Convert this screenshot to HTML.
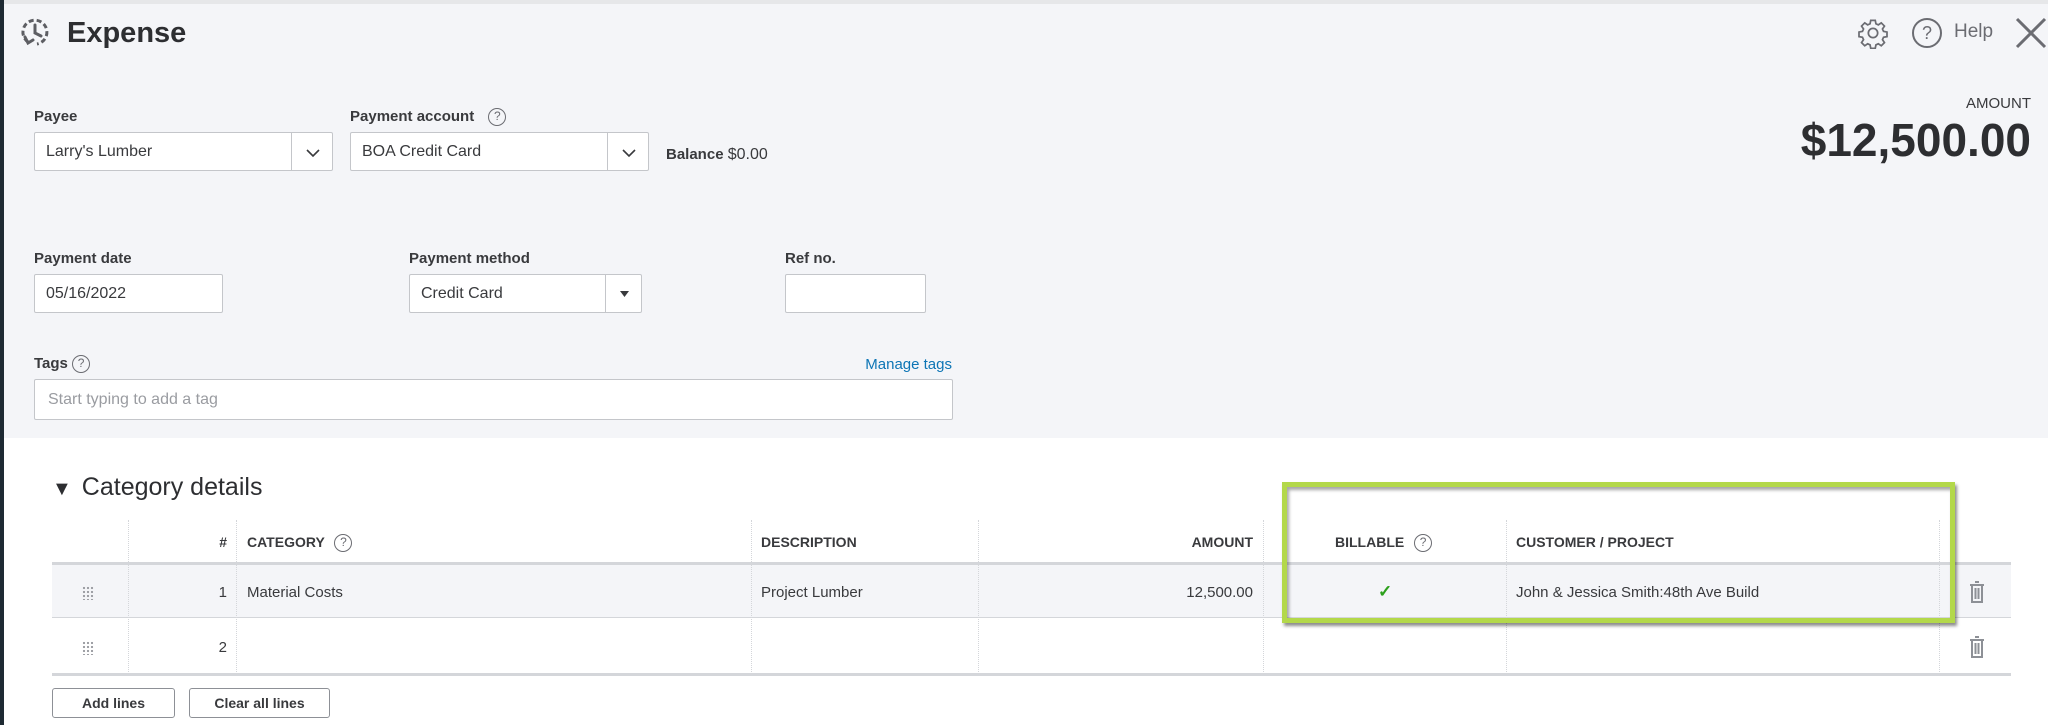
<!DOCTYPE html>
<html><head><meta charset="utf-8">
<style>
*{box-sizing:border-box;margin:0;padding:0}
body{width:2048px;height:725px;overflow:hidden;background:#fff;font-family:"Liberation Sans",sans-serif;color:#393a3d;position:relative}
.a{position:absolute}
.top{left:0;top:0;width:2048px;height:438px;background:#f4f5f8;border-top:4px solid #e6e7e9}
.lstrip{left:0;top:0;width:4px;height:725px;background:#1e2a33}
.lbl{font-size:15px;font-weight:bold;color:#393a3d}
.inp{background:#fff;border:1px solid #c4c6ca;border-radius:2px;font-size:16px;color:#393a3d;padding-left:11px;display:flex;align-items:center}
.dd{position:absolute;top:0;bottom:0;border-left:1px solid #c4c6ca}
.q{display:inline-block;width:18px;height:18px;border:1.5px solid #6b6c72;border-radius:50%;font-size:12px;line-height:15px;text-align:center;color:#6b6c72;font-weight:normal;vertical-align:middle}
.th{font-size:14px;font-weight:bold;color:#393a3d;top:534px}
.td{font-size:15px;color:#393a3d}
.vl{top:520px;height:154px;width:0;border-left:1px dotted #d4d6da}
.btn{border:1.5px solid #8d9096;border-radius:3px;background:#fff;font-size:14px;font-weight:bold;color:#393a3d;display:flex;align-items:center;justify-content:center;top:688px;height:30px}
.grip{width:12px;height:14px;background-image:radial-gradient(circle,#9a9ca1 1px,transparent 1.3px);background-size:4px 4px}
</style></head><body>
<div class="a top"></div>
<div class="a lstrip"></div>

<svg class="a" style="left:20px;top:15px" width="34" height="34" viewBox="0 0 34 34" fill="none" stroke="#5d5e63" stroke-width="3">
<path d="M8 27 A12 12 0 1 1 17 29" stroke-dasharray="5 3"/>
<path d="M5 22 L8 28 L13 25" stroke-linecap="round"/>
<path d="M15 10 V18 L21 21" stroke-linecap="round"/>
</svg>
<div class="a" style="left:67px;top:17px;font-size:29px;font-weight:bold;color:#2d2e31">Expense</div>

<svg class="a" style="left:1857px;top:17px" width="32" height="32" viewBox="0 0 24 24" fill="none" stroke="#6b6c72" stroke-width="1.3"><circle cx="12" cy="12" r="3.5"/><path d="M10.3 2.5h3.4l.5 2.6 1.8.8 2.2-1.5 2.4 2.4-1.5 2.2.8 1.8 2.6.5v3.4l-2.6.5-.8 1.8 1.5 2.2-2.4 2.4-2.2-1.5-1.8.8-.5 2.6h-3.4l-.5-2.6-1.8-.8-2.2 1.5-2.4-2.4 1.5-2.2-.8-1.8-2.6-.5v-3.4l2.6-.5.8-1.8-1.5-2.2 2.4-2.4 2.2 1.5 1.8-.8z"/></svg>
<div class="a" style="left:1912px;top:18px;width:30px;height:30px;border:2px solid #6b6c72;border-radius:50%;text-align:center;font-size:18px;line-height:26px;color:#6b6c72">?</div>
<div class="a" style="left:1954px;top:21px;font-size:19px;color:#6b6c72">Help</div>
<svg class="a" style="left:2014px;top:17px" width="34" height="32" viewBox="0 0 34 32" stroke="#6b6c72" stroke-width="3"><path d="M3 2 L31 30 M31 2 L3 30"/></svg>

<div class="a" style="right:17px;top:95px;font-size:15px;color:#393a3d">AMOUNT</div>
<div class="a" style="right:17px;top:113px;font-size:46px;font-weight:bold;color:#2d2e31">$12,500.00</div>

<div class="a lbl" style="left:34px;top:108px">Payee</div>
<div class="a inp" style="left:34px;top:132px;width:299px;height:39px">Larry's Lumber<div class="dd" style="left:256px;width:42px"><svg width="42" height="37" viewBox="0 0 42 37"><path d="M15 17 l6 6 6-6" fill="none" stroke="#393a3d" stroke-width="1.6"/></svg></div></div>

<div class="a lbl" style="left:350px;top:108px">Payment account <span class="q" style="margin-left:10px">?</span></div>
<div class="a inp" style="left:350px;top:132px;width:299px;height:39px">BOA Credit Card<div class="dd" style="left:256px;width:42px"><svg width="42" height="37" viewBox="0 0 42 37"><path d="M15 17 l6 6 6-6" fill="none" stroke="#393a3d" stroke-width="1.6"/></svg></div></div>
<div class="a" style="left:666px;top:146px;font-size:15px"><b>Balance</b> <span style="font-size:16px">$0.00</span></div>

<div class="a lbl" style="left:34px;top:250px">Payment date</div>
<div class="a inp" style="left:34px;top:274px;width:189px;height:39px">05/16/2022</div>
<div class="a lbl" style="left:409px;top:250px">Payment method</div>
<div class="a inp" style="left:409px;top:274px;width:233px;height:39px">Credit Card<div class="dd" style="left:195px;width:37px"><svg width="37" height="37" viewBox="0 0 37 37"><path d="M14 16 h9 l-4.5 6z" fill="#393a3d"/></svg></div></div>
<div class="a lbl" style="left:785px;top:250px">Ref no.</div>
<div class="a inp" style="left:785px;top:274px;width:141px;height:39px"></div>

<div class="a lbl" style="left:34px;top:355px">Tags <span class="q">?</span></div>
<div class="a" style="right:1096px;top:356px;font-size:15px;color:#0d75b5">Manage tags</div>
<div class="a inp" style="left:34px;top:379px;width:919px;height:41px;color:#9a9ca1;padding-left:13px">Start typing to add a tag</div>

<div class="a" style="left:52px;top:473px;font-size:25px;color:#2d2e31"><span style="font-size:20px;margin-right:10px">&#9660;</span>Category details</div>

<div class="a" style="left:52px;top:563px;width:1959px;height:55px;background:#f4f5f8"></div>
<div class="a" style="left:52px;top:562px;width:1959px;height:3px;background:#d4d6da"></div>
<div class="a" style="left:52px;top:617px;width:1959px;height:1px;background:#d4d6da"></div>
<div class="a" style="left:52px;top:673px;width:1959px;height:3px;background:#d4d6da"></div>
<div class="a vl" style="left:128px"></div>
<div class="a vl" style="left:236px"></div>
<div class="a vl" style="left:751px"></div>
<div class="a vl" style="left:978px"></div>
<div class="a vl" style="left:1263px"></div>
<div class="a vl" style="left:1506px"></div>
<div class="a vl" style="left:1939px"></div>

<div class="a th" style="right:1821px">#</div>
<div class="a th" style="left:247px">CATEGORY <span class="q" style="margin-left:6px">?</span></div>
<div class="a th" style="left:761px">DESCRIPTION</div>
<div class="a th" style="right:795px">AMOUNT</div>
<div class="a th" style="left:1335px">BILLABLE <span class="q" style="margin-left:6px">?</span></div>
<div class="a th" style="left:1516px">CUSTOMER / PROJECT</div>

<div class="a grip" style="left:82px;top:586px"></div>
<div class="a td" style="right:1821px;top:584px">1</div>
<div class="a td" style="left:247px;top:584px">Material Costs</div>
<div class="a td" style="left:761px;top:584px">Project Lumber</div>
<div class="a td" style="right:795px;top:584px">12,500.00</div>
<div class="a td" style="left:1378px;top:582px;color:#2ca01c;font-weight:bold;font-size:17px">&#10003;</div>
<div class="a td" style="left:1516px;top:584px">John &amp; Jessica Smith:48th Ave Build</div>
<div class="a grip" style="left:82px;top:641px"></div>
<div class="a td" style="right:1821px;top:639px">2</div>

<svg class="a" style="left:1969px;top:581px" width="16" height="22" viewBox="0 0 16 22" fill="none" stroke="#8d9096" stroke-width="2"><path d="M1 4h14M6 1h4M3 4v17h10V4M6.5 7v11M9.5 7v11"/></svg>
<svg class="a" style="left:1969px;top:636px" width="16" height="22" viewBox="0 0 16 22" fill="none" stroke="#8d9096" stroke-width="2"><path d="M1 4h14M6 1h4M3 4v17h10V4M6.5 7v11M9.5 7v11"/></svg>

<div class="a" style="left:1282px;top:482px;width:673px;height:141px;border:5px solid #b3d84a;box-shadow:2px 3px 3px rgba(0,0,0,.45), inset 2px 3px 3px rgba(0,0,0,.35)"></div>

<div class="a btn" style="left:52px;width:123px">Add lines</div>
<div class="a btn" style="left:189px;width:141px">Clear all lines</div>
</body></html>
